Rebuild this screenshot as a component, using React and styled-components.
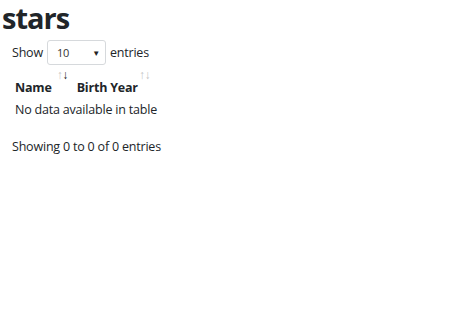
import styled, { createGlobalStyle } from 'styled-components';

const GlobalStyle = createGlobalStyle`
    body {
        margin: 0;
        background: #fff;
        font-family: "Open Sans", "Noto Sans", sans-serif;
        color: #212529;
    }
`;

const Title = styled.h1`
    margin: 0;
    padding-left: 2px;
    font-size: 29px;
    font-weight: 700;
    line-height: 36px;
    letter-spacing: -1px;
`;

const Wrapper = styled.div`
    padding-left: 12px;
    font-size: 12.5px;
    line-height: 18px;
    letter-spacing: -0.2px;
`;

const LengthRow = styled.div`
    display: flex;
    align-items: center;
    gap: 4px;
    margin-top: 4px;
    height: 25px;
`;

const SelectBox = styled.div`
    box-sizing: border-box;
    width: 59px;
    height: 25px;
    border: 1px solid #d6d9dc;
    border-radius: 3px;
    display: flex;
    align-items: center;
    justify-content: space-between;
    padding: 0 5px 0 9px;
    font-size: 11px;
    color: #333;
`;

const Caret = styled.span`
    font-size: 8px;
    color: #222;
`;

const Table = styled.table`
    border-collapse: collapse;
`;

const Th = styled.th`
    position: relative;
    text-align: left;
    font-weight: 700;
    padding: 14px 22px 2px 3px;
    white-space: nowrap;
`;

const SortIcons = styled.span`
    position: absolute;
    top: 4px;
    right: ${(p) => p.$right}px;
    font-size: 12px;
    line-height: 12px;
    font-weight: 400;
    letter-spacing: -0.5px;
`;

const Arrow = styled.span`
    color: ${(p) => (p.$active ? '#222' : '#c4c4c4')};
`;

const Td = styled.td`
    padding: 2px 3px;
`;

const Info = styled.div`
    margin-top: 17px;
`;

const columns = [
    { name: 'Name', sorted: true, right: 6 },
    { name: 'Birth Year', sorted: false, right: 10 },
];

export default function App() {
    return (
        <>
            <GlobalStyle />
            <Title>stars</Title>
            <Wrapper>
                <LengthRow>
                    Show
                    <SelectBox>
                        10
                        <Caret>▼</Caret>
                    </SelectBox>
                    entries
                </LengthRow>
                <Table>
                    <thead>
                        <tr>
                            {columns.map((col) => (
                                <Th key={col.name}>
                                    {col.name}
                                    <SortIcons $right={col.right}>
                                        <Arrow>↑</Arrow>
                                        <Arrow $active={col.sorted}>↓</Arrow>
                                    </SortIcons>
                                </Th>
                            ))}
                        </tr>
                    </thead>
                    <tbody>
                        <tr>
                            <Td colSpan={2}>No data available in table</Td>
                        </tr>
                    </tbody>
                </Table>
                <Info>Showing 0 to 0 of 0 entries</Info>
            </Wrapper>
        </>
    );
}
